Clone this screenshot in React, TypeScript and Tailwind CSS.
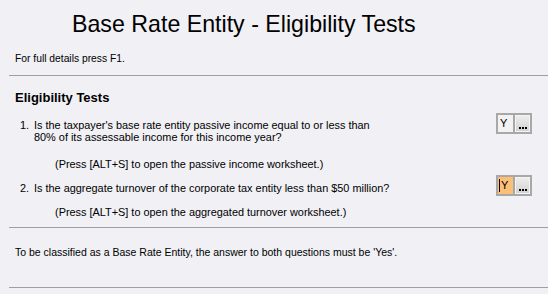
import React from "react";

function ValueBox({ active }: { active?: boolean }) {
  return (
    <div className="flex h-[21px] w-[36px] shrink-0 gap-[2px] bg-[#a8a8a8] p-[2px]">
      <div
        className={
          active
            ? "relative flex w-[15px] items-center justify-start bg-[#fdbf78] pl-[3px] text-[11px] leading-[17px] text-black"
            : "relative flex w-[15px] items-center justify-start bg-[#f2f2f2] pl-[2px] text-[11px] leading-[17px] text-black"
        }
      >
        {active && <span className="absolute left-[1px] top-[2px] h-[13px] w-[1px] bg-black" />}
        <span>Y</span>
      </div>
      <div className="flex flex-1 items-end justify-center border border-[#f4f4f4] bg-gradient-to-b from-[#ececec] to-[#d3d3d3] pb-[2px]">
        <div className="flex gap-[1px]">
          <span className="h-[2px] w-[2px] bg-black" />
          <span className="h-[2px] w-[2px] bg-black" />
          <span className="h-[2px] w-[2px] bg-black" />
        </div>
      </div>
    </div>
  );
}

export default function App() {
  return (
    <div className="h-[294px] w-[548px] overflow-hidden bg-[#f0f0f5] font-['Liberation_Sans',Arial,sans-serif] text-[10.9px] leading-[12px] text-black">
      <div className="pl-[72px] pt-[11px] text-[23.2px] leading-[26px]">Base Rate Entity - Eligibility Tests</div>
      <div className="mt-[16px] pl-[15px] text-[10.3px]">For full details press F1.</div>
      <div className="ml-[9px] mt-[10px] border-t border-[#a0a0a0]" />
      <div className="mt-[14px] pl-[15px] text-[13px] font-bold leading-[15px]">Eligibility Tests</div>

      <div className="mt-[8px] flex items-start pr-[16px]">
        <div className="flex pl-[20px] pt-[6px]">
          <span className="w-[14px]">1.</span>
          <span>
            Is the taxpayer&apos;s base rate entity passive income equal to or less than
            <br />
            80% of its assessable income for this income year?
          </span>
        </div>
        <div className="ml-auto">
          <ValueBox />
        </div>
      </div>
      <div className="mt-[15px] pl-[55px]">(Press [ALT+S] to open the passive income worksheet.)</div>

      <div className="mt-[5px] flex items-start pr-[16px]">
        <div className="flex pl-[20px] pt-[7px]">
          <span className="w-[14px]">2.</span>
          <span>Is the aggregate turnover of the corporate tax entity less than $50 million?</span>
        </div>
        <div className="ml-auto">
          <ValueBox active />
        </div>
      </div>
      <div className="mt-[10px] pl-[55px]">(Press [ALT+S] to open the aggregated turnover worksheet.)</div>

      <div className="ml-[9px] mt-[9px] border-t border-[#a0a0a0]" />
      <div className="mt-[18px] pl-[15px] text-[10.5px]">To be classified as a Base Rate Entity, the answer to both questions must be &apos;Yes&apos;.</div>
      <div className="ml-[9px] mt-[29px] border-t border-[#a0a0a0]" />
    </div>
  );
}
